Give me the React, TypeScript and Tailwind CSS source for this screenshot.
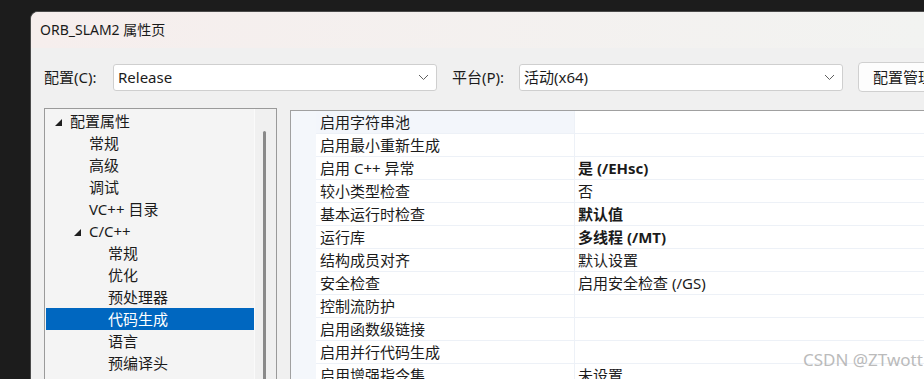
import React from "react";

const font = "font-['Noto_Sans','Noto_Sans_CJK_SC',sans-serif]";

type TreeItem = { label: string; level: number; open?: boolean; selected?: boolean };

const treeItems: TreeItem[] = [
  { label: "配置属性", level: 0, open: true },
  { label: "常规", level: 1 },
  { label: "高级", level: 1 },
  { label: "调试", level: 1 },
  { label: "VC++ 目录", level: 1 },
  { label: "C/C++", level: 1, open: true },
  { label: "常规", level: 2 },
  { label: "优化", level: 2 },
  { label: "预处理器", level: 2 },
  { label: "代码生成", level: 2, selected: true },
  { label: "语言", level: 2 },
  { label: "预编译头", level: 2 },
];

const props: { name: string; value: string; bold?: boolean }[] = [
  { name: "启用字符串池", value: "" },
  { name: "启用最小重新生成", value: "" },
  { name: "启用 C++ 异常", value: "是 (/EHsc)", bold: true },
  { name: "较小类型检查", value: "否" },
  { name: "基本运行时检查", value: "默认值", bold: true },
  { name: "运行库", value: "多线程 (/MT)", bold: true },
  { name: "结构成员对齐", value: "默认设置" },
  { name: "安全检查", value: "启用安全检查 (/GS)" },
  { name: "控制流防护", value: "" },
  { name: "启用函数级链接", value: "" },
  { name: "启用并行代码生成", value: "" },
  { name: "启用增强指令集", value: "未设置" },
];

function Chevron() {
  return (
    <svg width="11" height="7" viewBox="0 0 11 7" className="shrink-0">
      <path d="M1 1 L5.5 5.5 L10 1" fill="none" stroke="#5f5f5f" strokeWidth="1" />
    </svg>
  );
}

function Select({ value }: { value: string }) {
  return (
    <div className="flex h-[27px] w-[324px] shrink-0 items-center justify-between rounded-[3px] border border-[#cfcfcf] bg-white pl-[4px] pr-[7px]">
      <span className="text-[15px] leading-none text-[#1b1b1b]">{value}</span>
      <Chevron />
    </div>
  );
}

function Triangle() {
  return (
    <svg width="7" height="7" viewBox="0 0 7 7" className="block">
      <polygon points="7,0 7,7 0,7" fill="#1f1f1f" />
    </svg>
  );
}

export default function App() {
  return (
    <div className={`relative h-[379px] w-[924px] overflow-hidden bg-[#1c1c1c] ${font}`}>
      <div className="ml-[30px] mt-[11px] flex h-[368px] flex-col overflow-hidden rounded-tl-[8px] border-l border-t border-[#4a4a4a] bg-[#f0f0f0]">
        {/* title bar */}
        <div className="flex h-[36px] shrink-0 items-center bg-gradient-to-r from-[#f6eeed] to-[#f2f3f1] pl-[9px]">
          <span className="text-[14px] leading-none text-[#1a1a1a]">ORB_SLAM2 属性页</span>
        </div>

        {/* config row */}
        <div className="mt-[14px] flex h-[30px] shrink-0 items-center pl-[13px]">
          <span className="w-[69px] shrink-0 text-[15px] leading-none text-[#1b1b1b]">配置(C):</span>
          <Select value="Release" />
          <span className="ml-[15px] w-[67px] shrink-0 text-[15px] leading-none text-[#1b1b1b]">平台(P):</span>
          <Select value="活动(x64)" />
          <div className="ml-[15px] flex h-[30px] w-[120px] shrink-0 items-center rounded-[4px] border border-[#d0d0d0] bg-[#fdfdfd] pl-[14px]">
            <span className="whitespace-nowrap text-[15px] leading-none text-[#1b1b1b]">配置管理器...</span>
          </div>
        </div>

        {/* main area */}
        <div className="mt-[16px] flex min-h-0 flex-1 items-start pl-[13px]">
          {/* tree */}
          <div className="flex h-[300px] w-[233px] shrink-0 border border-[#9a9a9a] bg-[#f4f4f4]">
            <div className="flex-1 pt-[1px] pl-[1px]">
              {treeItems.map((t, i) => (
                <div
                  key={i}
                  className={`flex h-[22px] items-center ${t.selected ? "bg-[#0067c0] text-white" : "text-[#1b1b1b]"}`}
                  style={{ paddingLeft: 24 + t.level * 19 }}
                >
                  <span className="relative flex items-center">
                    {t.open && (
                      <span className="absolute left-[-15px] top-1/2 -translate-y-[2px]">
                        <Triangle />
                      </span>
                    )}
                    <span className="text-[15px] leading-none">{t.label}</span>
                  </span>
                </div>
              ))}
            </div>
            <div className="w-[22px] shrink-0 border-l border-[#fafafa] bg-[#f0f0f0] pt-[22px] pl-[8px]">
              <div className="h-[260px] w-[3px] rounded-full bg-[#8a8a8a]" />
            </div>
          </div>

          {/* property grid */}
          <div className="ml-[13px] mt-[2px] flex flex-1 border-l border-t border-[#a0a0a0] bg-[#f4f7fb]">
            <div className="w-[25px] shrink-0" />
            <div className="flex-1">
              {props.map((p, i) => (
                <div key={i} className="flex h-[23px] border-b border-[#edf1f7]">
                  <div
                    className={`flex w-[259px] shrink-0 items-center border-r border-[#edf1f7] pl-[4px] ${i === 0 ? "bg-[#f3f6fb]" : "bg-white"}`}
                  >
                    <span className="text-[15px] leading-none text-[#1b1b1b]">{p.name}</span>
                  </div>
                  <div className="flex flex-1 items-center bg-white pl-[3px]">
                    <span className={`text-[15px] leading-none text-[#1b1b1b] ${p.bold ? "font-bold" : ""}`}>{p.value}</span>
                  </div>
                </div>
              ))}
            </div>
          </div>
        </div>
      </div>

      {/* watermark */}
      <div className="absolute left-[803px] top-[351px] text-[17px] leading-none text-[#b4b4b4] opacity-90">
        CSDN @ZTwott
      </div>
    </div>
  );
}
